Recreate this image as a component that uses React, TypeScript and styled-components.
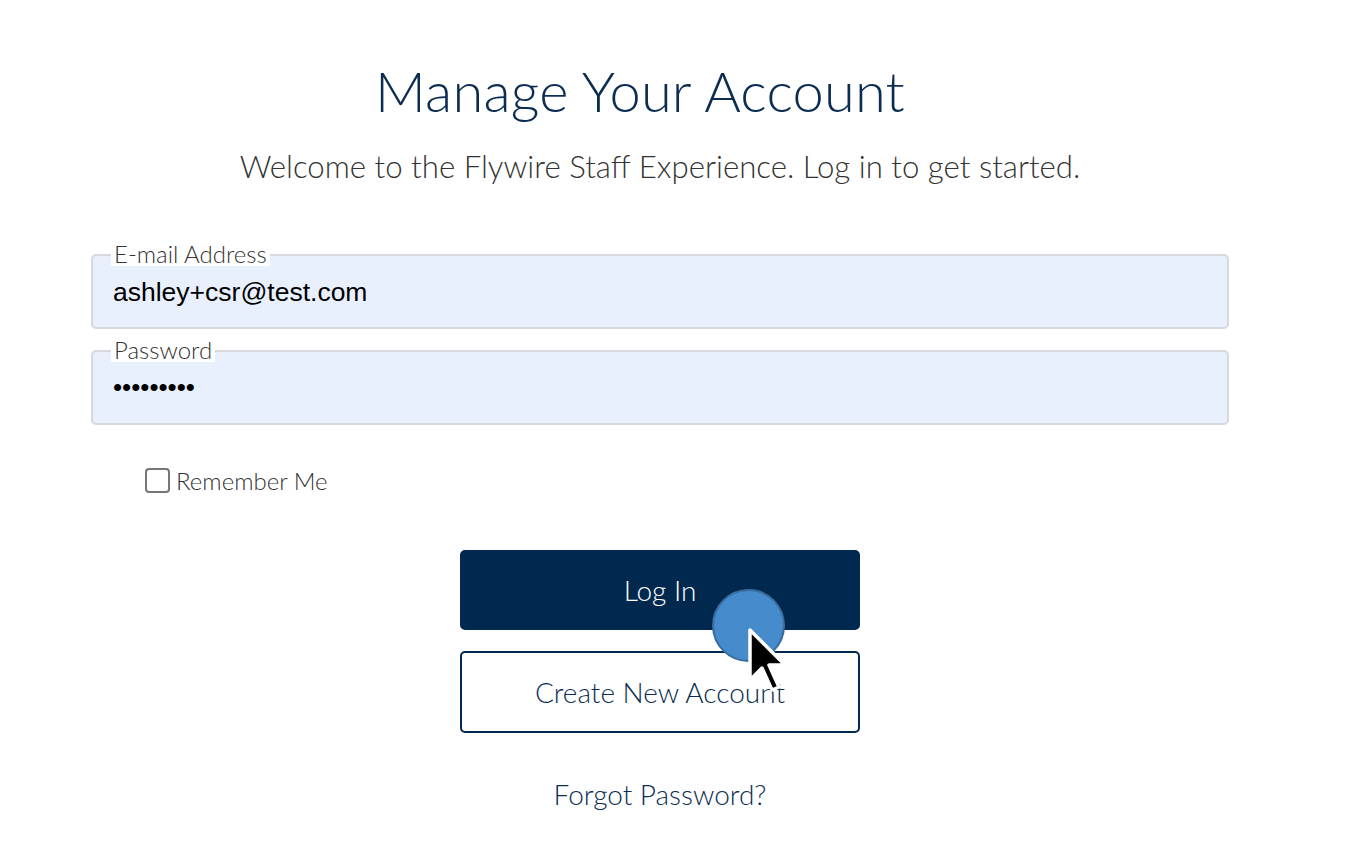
import React from "react";
import styled, { createGlobalStyle } from "styled-components";

const Global = createGlobalStyle`
  html, body { margin: 0; padding: 0; background: #ffffff; }
  body { font-family: Lato, "Open Sans", sans-serif; }
  * { box-sizing: border-box; }
`;

const Page = styled.div`
  width: 1358px;
  height: 848px;
  position: relative;
  overflow: hidden;
  background: #fff;
`;

const Column = styled.main`
  width: 1138px;
  margin-left: 91px;
  padding-top: 55px;
  display: flex;
  flex-direction: column;
  align-items: center;
`;

const Title = styled.h1`
  margin: 0 40px 0 0;
  font-family: Lato, sans-serif;
  font-weight: 300;
  font-size: 56px;
  line-height: 72px;
  color: #0b2d52;
  letter-spacing: 0.2px;
`;

const Subtitle = styled.p`
  margin: 19px 0 0;
  font-family: Lato, sans-serif;
  font-weight: 300;
  font-size: 31.2px;
  line-height: 40px;
  color: #333;
`;

const Form = styled.form`
  width: 100%;
  margin-top: 68px;
  display: flex;
  flex-direction: column;
  gap: 21px;
`;

const Field = styled.label`
  position: relative;
  display: block;
  height: 75px;
  background: #e8f0fe;
  border: 2px solid #d6d9de;
  border-radius: 5px;
`;

const FieldLabel = styled.span`
  position: absolute;
  left: 18px;
  top: -14px;
  padding: 0 3px;
  background: #fff;
  font-family: Lato, sans-serif;
  font-weight: 300;
  font-size: 24px;
  line-height: 24px;
  color: #333;
`;

const FieldValue = styled.span<{ $dots?: boolean }>`
  position: absolute;
  left: 20px;
  top: ${(p) => (p.$dots ? "19px" : "20px")};
  font-family: "Liberation Sans", Arial, sans-serif;
  font-size: ${(p) => (p.$dots ? "26px" : "26.5px")};
  line-height: 32px;
  color: #000;
`;

const RememberWrap = styled.div`
  width: 100%;
`;

const Remember = styled.label`
  display: flex;
  align-items: center;
  gap: 6px;
  margin: 41px 0 0 54px;
  font-family: Lato, sans-serif;
  font-weight: 300;
  font-size: 24px;
  color: #333;
`;

const Box = styled.span`
  width: 25px;
  height: 25px;
  border: 2px solid #767676;
  border-radius: 4px;
  background: #fff;
`;

const Actions = styled.div`
  margin-top: 55px;
  width: 400px;
  display: flex;
  flex-direction: column;
  gap: 21px;
`;

const Button = styled.button<{ $primary?: boolean }>`
  height: ${(p) => (p.$primary ? "80px" : "82px")};
  width: 400px;
  border-radius: 5px;
  border: 2px solid #01284f;
  background: ${(p) => (p.$primary ? "#01284f" : "#fff")};
  color: ${(p) => (p.$primary ? "#fff" : "#0b2d52")};
  font-family: Lato, sans-serif;
  font-weight: 300;
  font-size: 28px;
  cursor: pointer;
  padding: 0;
`;

const Forgot = styled.a`
  margin-top: 44px;
  font-family: Lato, sans-serif;
  font-weight: 300;
  font-size: 28px;
  color: #0b2d52;
  text-decoration: none;
`;

const ClickDot = styled.div`
  position: absolute;
  left: 712px;
  top: 589px;
  width: 73px;
  height: 73px;
  border-radius: 50%;
  background: #468bcc;
  border: 2px solid #3a6c9c;
`;

const Pointer = styled.svg`
  position: absolute;
  left: 746px;
  top: 626px;
`;

function RememberRow() {
  return (
    <RememberWrap>
      <Remember>
        <Box />
        Remember Me
      </Remember>
    </RememberWrap>
  );
}

export default function App() {
  return (
    <Page>
      <Global />
      <Column>
        <Title>Manage Your Account</Title>
        <Subtitle>Welcome to the Flywire Staff Experience. Log in to get started.</Subtitle>
        <Form onSubmit={(e) => e.preventDefault()}>
          <Field>
            <FieldLabel>E-mail Address</FieldLabel>
            <FieldValue>ashley+csr@test.com</FieldValue>
          </Field>
          <Field>
            <FieldLabel>Password</FieldLabel>
            <FieldValue $dots>•••••••••</FieldValue>
          </Field>
        </Form>
        <RememberRow />
        <Actions>
          <Button $primary>Log In</Button>
          <Button>Create New Account</Button>
        </Actions>
        <Forgot href="#">Forgot Password?</Forgot>
      </Column>
      <ClickDot />
      <Pointer width="46" height="70" viewBox="0 0 46 70">
        <path
          d="M4 4 L4 54 L16 42 L26 64 L33 61 L23 39 L39 39 Z"
          fill="#000"
          stroke="#fff"
          strokeWidth="3.5"
          strokeLinejoin="round"
        />
      </Pointer>
    </Page>
  );
}
